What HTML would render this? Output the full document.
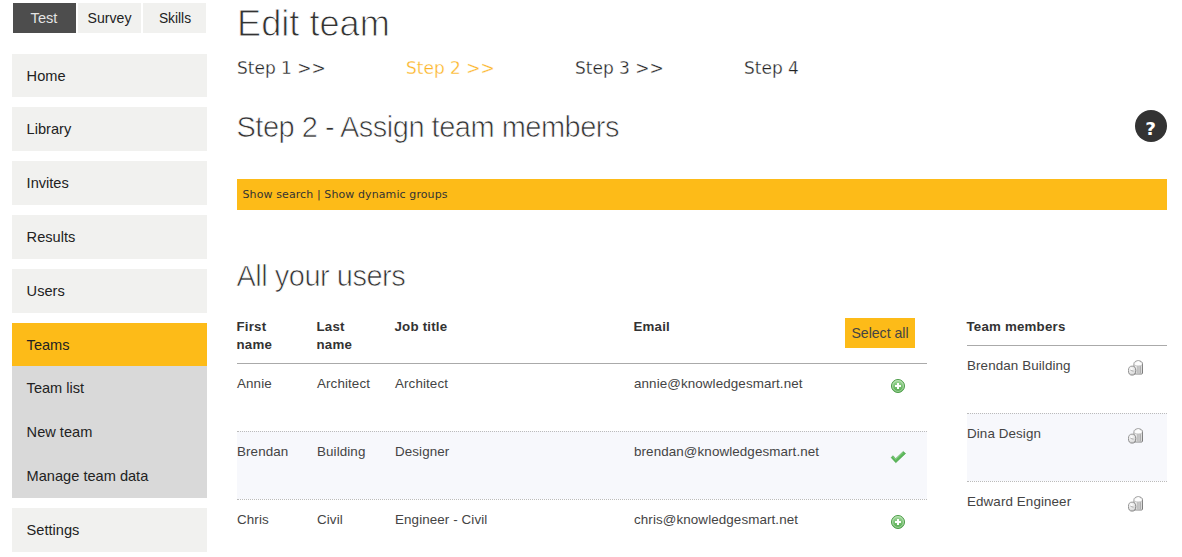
<!DOCTYPE html>
<html lang="en">
<head>
<meta charset="utf-8">
<title>Edit team</title>
<style>
html,body{margin:0;padding:0;background:#fff;}
body{width:1182px;height:557px;overflow:hidden;position:relative;font-family:"Liberation Sans",sans-serif;color:#333;}
.abs{position:absolute;white-space:nowrap;}
/* sidebar */
.tab{position:absolute;top:3px;height:30px;width:63px;background:#f1f1ef;color:#222;font-size:14.6px;line-height:30px;text-align:center;}
.tab.on{background:#4d4d4d;color:#e4e4e4;}
.mi{position:absolute;left:12px;width:195px;height:44px;background:#f1f1ef;color:#222;font-size:14.6px;line-height:44px;box-sizing:border-box;padding-left:14.6px;}
.mi.on{background:#fdbb18;}
.sub{position:absolute;left:12px;top:366px;width:195px;height:132px;background:#d9d9d9;}
.sub a{position:absolute;left:14.6px;font-size:14.6px;color:#222;line-height:20px;text-decoration:none;}
/* main */
h1,h2{margin:0;font-weight:normal;color:#333;position:absolute;left:237px;white-space:nowrap;}
h1{font-size:36.2px;top:1.5px;line-height:44px;-webkit-text-stroke:0.9px #fff;}
h2{font-size:29px;letter-spacing:-0.5px;line-height:36px;margin-top:0.4px;margin-left:-0.5px;-webkit-text-stroke:0.7px #fff;}
.step{-webkit-text-stroke:0.3px #fff;position:absolute;top:56.5px;font-family:"DejaVu Sans",sans-serif;font-size:17px;line-height:22px;color:#222;white-space:nowrap;}
.step.on{color:#fcb424;}
.bar{position:absolute;left:237px;top:179px;width:930px;height:31px;background:#fdbb18;font-family:"DejaVu Sans",sans-serif;font-size:11px;letter-spacing:0.1px;line-height:31px;color:#333;box-sizing:border-box;padding-left:5.5px;}
.help{position:absolute;left:1135px;top:110px;width:32px;height:32px;border-radius:50%;background:#333;color:#fff;font-family:"DejaVu Sans",sans-serif;font-weight:bold;font-size:18.5px;line-height:37px;text-align:center;text-indent:-1px;}
.th{margin-left:-0.5px;position:absolute;font-weight:bold;letter-spacing:0.2px;font-size:13.3px;line-height:18px;color:#333;}
.td{position:absolute;font-size:13.4px;letter-spacing:0.1px;line-height:18px;color:#444;white-space:nowrap;}
.row{position:absolute;left:237px;width:690px;height:67px;border-top:1px dotted #bbb;}
.row.alt,.mrow.alt{background:#f7f8fc;}
.mrow{position:absolute;left:967px;width:200px;height:67px;border-top:1px dotted #bbb;}
.btn{position:absolute;left:845px;top:318px;width:70px;height:30px;background:#fdbb18;color:#444;font-size:14.1px;line-height:30px;text-align:center;}
.ico{position:absolute;}
</style>
</head>
<body>
<!-- sidebar -->
<div class="tab on" style="left:13px;text-indent:-1px;line-height:31px">Test</div>
<div class="tab" style="left:78px;font-size:14.1px;line-height:31px">Survey</div>
<div class="tab" style="left:143px;font-size:13.8px;text-indent:1px;line-height:32px">Skills</div>

<div class="mi" style="top:54px;height:43px;line-height:45px">Home</div>
<div class="mi" style="top:107px">Library</div>
<div class="mi" style="top:161px">Invites</div>
<div class="mi" style="top:215px">Results</div>
<div class="mi" style="top:269px">Users</div>
<div class="mi on" style="top:323px;height:43px;line-height:45px">Teams</div>
<div class="sub">
  <a style="top:12px">Team list</a>
  <a style="top:56px">New team</a>
  <a style="top:100px">Manage team data</a>
</div>
<div class="mi" style="top:508px">Settings</div>

<!-- main -->
<h1>Edit team</h1>
<div class="step" style="left:237px">Step 1 &gt;&gt;</div>
<div class="step on" style="left:406px">Step 2 &gt;&gt;</div>
<div class="step" style="left:575px">Step 3 &gt;&gt;</div>
<div class="step" style="left:744px">Step 4</div>

<h2 style="top:109px">Step 2 - Assign team members</h2>
<div class="help">?</div>

<div class="bar">Show search | Show dynamic groups</div>

<h2 style="top:258px">All your users</h2>

<!-- users table -->
<div class="th" style="left:237px;top:318px">First<br>name</div>
<div class="th" style="left:317px;top:318px">Last<br>name</div>
<div class="th" style="left:395px;top:318px">Job title</div>
<div class="th" style="left:634px;top:318px">Email</div>
<div class="btn">Select all</div>
<div class="abs" style="left:237px;top:363px;width:690px;height:1px;background:#aaa"></div>

<div class="row" style="top:364px;border-top:none"></div>
<div class="row alt" style="top:431px"></div>
<div class="row" style="top:499px"></div>

<div class="td" style="left:237px;top:375px">Annie</div>
<div class="td" style="left:317px;top:375px">Architect</div>
<div class="td" style="left:395px;top:375px">Architect</div>
<div class="td" style="left:634px;top:375px">annie@knowledgesmart.net</div>

<div class="td" style="left:237px;top:443px">Brendan</div>
<div class="td" style="left:317px;top:443px">Building</div>
<div class="td" style="left:395px;top:443px">Designer</div>
<div class="td" style="left:634px;top:443px">brendan@knowledgesmart.net</div>

<div class="td" style="left:237px;top:511px">Chris</div>
<div class="td" style="left:317px;top:511px">Civil</div>
<div class="td" style="left:395px;top:511px">Engineer - Civil</div>
<div class="td" style="left:634px;top:511px">chris@knowledgesmart.net</div>

<!-- team members -->
<div class="th" style="left:967px;top:318px">Team members</div>
<div class="abs" style="left:967px;top:345px;width:200px;height:1px;background:#aaa"></div>
<div class="mrow" style="top:346px;border-top:none"></div>
<div class="mrow alt" style="top:413px"></div>
<div class="mrow" style="top:481px"></div>
<div class="td" style="left:967px;top:357px">Brendan Building</div>
<div class="td" style="left:967px;top:425px">Dina Design</div>
<div class="td" style="left:967px;top:493px">Edward Engineer</div>

<svg width="0" height="0" style="position:absolute">
<defs>
<linearGradient id="gadd" x1="0" y1="0" x2="0" y2="1"><stop offset="0" stop-color="#a6dba0"/><stop offset="1" stop-color="#4da648"/></linearGradient>
<linearGradient id="gbin" x1="0" y1="0" x2="1" y2="0"><stop offset="0" stop-color="#f4f4f4"/><stop offset="1" stop-color="#c6c6c6"/></linearGradient>
<linearGradient id="gbinS" x1="0" y1="0" x2="1" y2="1"><stop offset="0" stop-color="#9a9a9a"/><stop offset="1" stop-color="#6a6a6a"/></linearGradient>
<radialGradient id="glid" cx=".4" cy=".35" r=".7"><stop offset="0" stop-color="#fff"/><stop offset="1" stop-color="#cfcfcf"/></radialGradient>
<symbol id="i-add" viewBox="0 0 16 16">
<circle cx="8" cy="8" r="6.5" fill="url(#gadd)" stroke="#4b9b47" stroke-width="1"/>
<circle cx="8" cy="8" r="5.4" fill="none" stroke="#d4efd0" stroke-width=".7" opacity=".85"/>
<path d="M7 5h2v2h2v2h-2v2h-2v-2h-2v-2h2z" fill="#fff"/>
</symbol>
<symbol id="i-tick" viewBox="0 0 16 16">
<path d="M1.100 8.500 3.100 6.700l2.500 3 7.600-7.200 2.400 2L5.800 13.700z" fill="#5cb85a" stroke="#3f9a3e" stroke-width=".5" stroke-linejoin="round"/>
<path d="M3.100 7.500l2.500 2.900 7.500-7" fill="none" stroke="#93d48f" stroke-width=".8"/>
</symbol>
<symbol id="i-bin" viewBox="0 0 16 16">
<path d="M5.900 3.700c0-1.700 1.900-3 4.300-3s4.300 1.300 4.300 3v9.400c0 .5-.4.900-.9.900h-6.800c-.5 0-.9-.4-.9-.9z" fill="#e9e9e9" stroke="url(#gbinS)" stroke-width=".9"/>
<path d="M6.500 4.300c.9-1.300 2.300-2.700 3.700-3.300 1.500.6 2.900 2 3.700 3.300-1 .9-2.300 1.300-3.700 1.300s-2.700-.4-3.700-1.300z" fill="#fdfdfd"/>
<rect x="7.600" y="5.800" width="5.800" height="7.500" fill="url(#gbin)"/>
<path d="M9.300 6.200v7M10.900 6.200v7M12.500 6.200v7" stroke="#9a9a9a" stroke-width=".6"/>
<path d="M6.300 5c1.100.8 2.500 1.100 3.900 1.100s2.800-.3 3.900-1.100" fill="none" stroke="#b5b5b5" stroke-width=".6"/>
<ellipse cx="4.100" cy="10.600" rx="3.700" ry="4.500" fill="url(#glid)" stroke="url(#gbinS)" stroke-width=".9"/>
<path d="M2.400 10.100c1 .7 2 1 3.200 1" fill="none" stroke="#9d9d9d" stroke-width=".9"/>
</symbol>
</defs>
</svg>
<svg class="ico" style="left:890px;top:378px" width="16" height="16"><use href="#i-add"/></svg>
<svg class="ico" style="left:890px;top:449px" width="16" height="16"><use href="#i-tick"/></svg>
<svg class="ico" style="left:890px;top:514px" width="16" height="16"><use href="#i-add"/></svg>
<svg class="ico" style="left:1128px;top:360px" width="16" height="16"><use href="#i-bin"/></svg>
<svg class="ico" style="left:1128px;top:428px" width="16" height="16"><use href="#i-bin"/></svg>
<svg class="ico" style="left:1128px;top:496px" width="16" height="16"><use href="#i-bin"/></svg>
</body>
</html>
